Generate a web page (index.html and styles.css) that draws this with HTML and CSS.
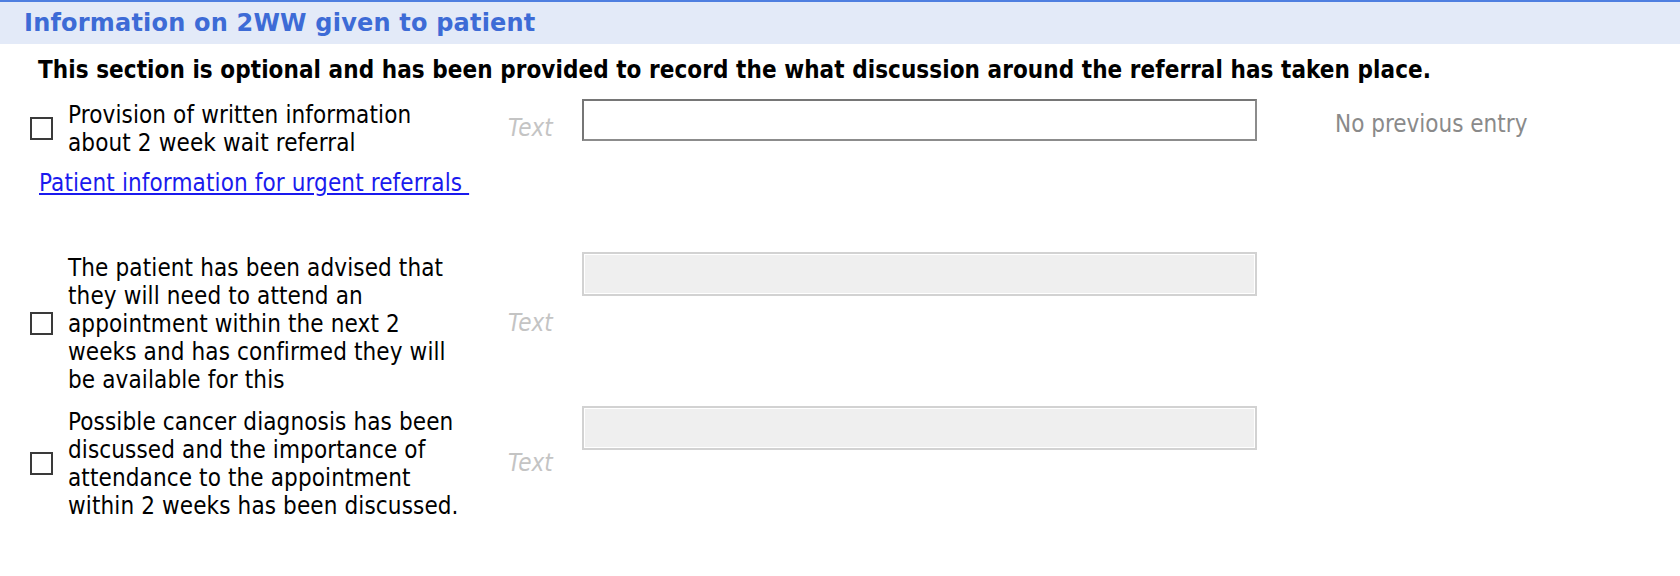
FILE: index.html
```html
<!DOCTYPE html>
<html>
<head>
<meta charset="utf-8">
<link rel="stylesheet" href="styles.css">
</head>
<body>
<div class="section">
  <div class="header">Information on 2WW given to patient</div>
  <div class="intro">This section is optional and has been provided to record the what discussion around the referral has taken place.</div>

  <div class="row row-first">
    <input type="checkbox" class="check">
    <div class="label">Provision of written information about 2 week wait referral</div>
    <div class="hint">Text</div>
    <div class="field"></div>
    <div class="note">No previous entry</div>
  </div>
  <div class="link-line"><a href="#" class="link">Patient information for urgent referrals </a></div>

  <div class="row row-second">
    <input type="checkbox" class="check">
    <div class="label">The patient has been advised that they will need to attend an appointment within the next 2 weeks and has confirmed they will be available for this</div>
    <div class="hint">Text</div>
    <div class="field field-disabled"></div>
    <div class="note"></div>
  </div>

  <div class="row row-third">
    <input type="checkbox" class="check">
    <div class="label">Possible cancer diagnosis has been discussed and the importance of attendance to the appointment within 2 weeks has been discussed.</div>
    <div class="hint">Text</div>
    <div class="field field-disabled"></div>
    <div class="note"></div>
  </div>
</div>
</body>
</html>
```
FILE: styles.css
```css
html, body {
  margin: 0;
  padding: 0;
  background: #ffffff;
}

body {
  font-family: "DejaVu Sans Condensed", "DejaVu Sans", Tahoma, sans-serif;
  font-stretch: condensed;
  font-size: 24px;
  color: #000000;
}

.header {
  border-top: 2px solid #4f7fe0;
  background: #e3eaf8;
  height: 44px;
  box-sizing: border-box;
  padding-left: 24px;
  display: flex;
  align-items: center;
  font-family: "DejaVu Sans", Verdana, sans-serif;
  font-stretch: normal;
  font-weight: bold;
  font-size: 24px;
  letter-spacing: 0.2px;
  color: #3d6bd6;
}

.intro {
  font-weight: bold;
  padding-left: 38px;
  margin-top: 12px;
  line-height: 28px;
  letter-spacing: 0.06px;
}

.row {
  display: grid;
  grid-template-columns: 22px 418px 112px 675px 1fr;
  padding-left: 30px;
  align-items: center;
}

.row-first {
  margin-top: 15px;
}

.row-second {
  margin-top: 55px;
}

.row-third {
  margin-top: 12px;
}

.check {
  appearance: none;
  -webkit-appearance: none;
  grid-row: 1;
  grid-column: 1;
  width: 23px;
  height: 23px;
  margin: 0;
  border: 2px solid #3a3a3a;
  background: #ffffff;
  box-sizing: border-box;
}

.label {
  grid-row: 1;
  grid-column: 2;
  align-self: start;
  line-height: 28px;
  padding-left: 16px;
  padding-top: 2px;
  letter-spacing: 0.12px;
}

.hint {
  grid-row: 1;
  grid-column: 3;
  font-style: italic;
  color: #c4c4c4;
  padding-left: 38px;
}

.field {
  grid-row: 1;
  grid-column: 4;
  align-self: start;
  height: 42px;
  box-sizing: border-box;
  border: 2px solid #8c8c8c;
  border-top-color: #767676;
  border-left-color: #767676;
  background: #ffffff;
}

.field-disabled {
  border: 2px solid #d2d2d2;
  box-shadow: inset 0 0 0 1px #ffffff;
  background: #efefef;
  height: 44px;
}

.note {
  grid-row: 1;
  grid-column: 5;
  align-self: start;
  padding-left: 78px;
  padding-top: 11px;
  line-height: 28px;
  color: #8a8a8a;
}

.link-line {
  padding-left: 39px;
  margin-top: 12px;
  line-height: 28px;
  letter-spacing: 0.12px;
}

.link {
  color: #1a1aee;
  text-decoration: underline;
  white-space: pre;
}
```
